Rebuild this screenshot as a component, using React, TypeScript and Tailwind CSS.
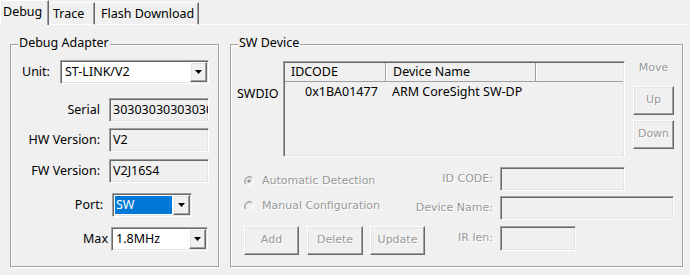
import React from "react";

const sunken =
  "border border-t-[#a0a0a0] border-l-[#a0a0a0] border-r-white border-b-white shadow-[inset_1px_1px_0_#696969,inset_-1px_-1px_0_#e3e3e3]";
const raised =
  "border border-t-white border-l-white border-r-[#696969] border-b-[#696969] shadow-[inset_-1px_-1px_0_#a0a0a0,inset_1px_1px_0_#e3e3e3]";
const dis =
  "font-['DejaVu_Sans',sans-serif] text-[11px] text-[#999999] [text-shadow:1px_1px_0_#ffffff]";

function Arrow() {
  return (
    <div className={`w-[17px] h-full flex items-center justify-center bg-[#f0f0f0] ${raised}`}>
      <svg width="7" height="4" viewBox="0 0 7 4">
        <polygon points="0,0 7,0 3.5,4" fill="#000" />
      </svg>
    </div>
  );
}

function Combo({ w, text, selected }: { w: string; text: string; selected?: boolean }) {
  return (
    <div className={`${w} h-[24px] flex bg-white ${sunken} p-[1px]`}>
      <div className="flex-1 flex items-stretch p-[1px]">
        {selected ? (
          <div className="flex-1 bg-[#0078d7] text-white pl-[1px] flex items-center leading-none">{text}</div>
        ) : (
          <div className="flex-1 pl-[2px] flex items-center leading-none">{text}</div>
        )}
      </div>
      <Arrow />
    </div>
  );
}

function Field({ text }: { text: string }) {
  return (
    <div className={`w-[100px] h-[24px] ${sunken} bg-[#f0f0f0] overflow-hidden whitespace-nowrap pl-[3px] flex items-center leading-none`}>
      {text}
    </div>
  );
}

function Group({ title, className, children }: { title: string; className: string; children: React.ReactNode }) {
  return (
    <div className={`relative border border-[#a0a0a0] shadow-[inset_1px_1px_0_#ffffff,1px_1px_0_#ffffff] h-[223px] ${className}`}>
      <span className="absolute -top-[10px] left-[7px] px-[1px] bg-[#f0f0f0] leading-[16px]">{title}</span>
      {children}
    </div>
  );
}

function Radio({ checked }: { checked?: boolean }) {
  return (
    <svg width="12" height="12" viewBox="0 0 12 12">
      <circle cx="6" cy="6" r="5" fill="#f0f0f0" />
      <path d="M 9.5 2.5 A 5 5 0 0 0 2.5 9.5" stroke="#9a9a9a" strokeWidth="1" fill="none" />
      <path d="M 9.5 2.5 A 5 5 0 0 1 2.5 9.5" stroke="#ffffff" strokeWidth="1" fill="none" />
      <path d="M 8.8 3.2 A 4 4 0 0 0 3.2 8.8" stroke="#c0c0c0" strokeWidth="1" fill="none" />
      {checked && <circle cx="6" cy="6" r="1.8" fill="#999999" />}
    </svg>
  );
}

function Btn({ w, label, h = "h-[29px]" }: { w: string; label: string; h?: string }) {
  return (
    <div className={`${w} ${h} shrink-0 flex items-center justify-center bg-[#f0f0f0] ${raised} ${dis}`}>{label}</div>
  );
}

function DisBox({ w }: { w: string }) {
  return <div className={`${w} h-[24px] ml-[7px] bg-[#f0f0f0] ${sunken}`} />;
}

export default function App() {
  return (
    <div className="w-[690px] h-[275px] bg-[#f0f0f0] overflow-hidden font-['Noto_Sans',sans-serif] text-[12.5px] text-black">
      {/* tabs */}
      <div className="flex h-[25px] items-end">
        <div className="w-[49px] h-[25px] border-t border-l border-white border-r border-r-[#696969] shadow-[inset_-1px_0_0_#a0a0a0] pl-[2px] leading-[22px]">
          Debug
        </div>
        <div className="w-[46px] h-[23px] border-t border-b border-white border-r border-r-[#696969] shadow-[inset_-1px_0_0_#a0a0a0] pl-[4px] leading-[21px]">
          Trace
        </div>
        <div className="w-[104px] h-[23px] border-t border-b border-white border-r border-r-[#696969] shadow-[inset_-1px_0_0_#a0a0a0] pl-[6px] leading-[21px] whitespace-nowrap">
          Flash Download
        </div>
        <div className="flex-1 h-[23px] border-b border-white" />
      </div>

      {/* body */}
      <div className="flex pt-[19px] pl-[10px] gap-[11px]">
        <Group title="Debug Adapter" className="w-[209px] flex flex-col">
          <div className="mt-[15px] h-[24px] flex items-center">
            <span className="w-[49px] pl-[11px]">Unit:</span>
            <Combo w="w-[149px]" text="ST-LINK/V2" />
          </div>
          <div className="mt-[14px] h-[24px] flex items-center">
            <span className="w-[98px] pr-[9px] text-right">Serial</span>
            <Field text="303030303030303030303030" />
          </div>
          <div className="mt-[6px] h-[24px] flex items-center">
            <span className="w-[98px] pr-[9px] text-right">HW Version:</span>
            <Field text="V2" />
          </div>
          <div className="mt-[7px] h-[24px] flex items-center">
            <span className="w-[98px] pr-[9px] text-right">FW Version:</span>
            <Field text="V2J16S4" />
          </div>
          <div className="mt-[10px] h-[24px] flex items-center">
            <span className="w-[101px] pr-[9px] text-right">Port:</span>
            <Combo w="w-[80px]" text="SW" selected />
          </div>
          <div className="mt-[10px] h-[24px] flex items-center">
            <span className="w-[100px] pr-[3px] text-right">Max</span>
            <Combo w="w-[97px]" text="1.8MHz" />
          </div>
        </Group>

        <Group title="SW Device" className="w-[453px] flex flex-col">
          <div className="mt-[16px] flex">
            <div className="w-[52px] pl-[6px] pt-[25px] leading-[16px]">SWDIO</div>
            <div className={`w-[342px] h-[96px] bg-[#f0f0f0] ${sunken} p-[1px]`}>
              <div className="flex h-[19px] border-b border-[#a0a0a0] leading-[18px]">
                <div className="w-[101px] pl-[6px] border-r border-[#a0a0a0] shadow-[1px_0_0_#ffffff]">IDCODE</div>
                <div className="w-[150px] pl-[7px] border-r border-[#a0a0a0] shadow-[1px_0_0_#ffffff]">Device Name</div>
                <div className="flex-1" />
              </div>
              <div className="flex h-[20px] items-center">
                <div className="w-[101px] pl-[20px]">0x1BA01477</div>
                <div className="w-[150px] pl-[6px] whitespace-nowrap">ARM CoreSight SW-DP</div>
              </div>
            </div>
            <div className="ml-[8px] w-[41px] flex flex-col items-center">
              <div className={`${dis} leading-[14px]`}>Move</div>
              <div className="mt-[11px]">
                <Btn w="w-[41px]" label="Up" />
              </div>
              <div className="mt-[5px]">
                <Btn w="w-[41px]" label="Down" />
              </div>
            </div>
          </div>

          <div className="mt-[10px] h-[24px] flex items-center">
            <div className="w-[172px] pl-[12px] pt-[4px]">
              <div className={`h-[16px] flex items-center gap-[7px] ${dis}`}>
                <Radio checked />
                <span>Automatic Detection</span>
              </div>
            </div>
            <span className={`w-[90px] text-right ${dis}`}>ID CODE:</span>
            <DisBox w="w-[125px]" />
          </div>
          <div className="mt-[5px] h-[24px] flex items-center">
            <div className="w-[172px] pl-[12px] pb-[4px]">
              <div className={`h-[16px] flex items-center gap-[7px] ${dis}`}>
                <Radio />
                <span className="whitespace-nowrap">Manual Configuration</span>
              </div>
            </div>
            <span className={`w-[90px] text-right ${dis} whitespace-nowrap`}>Device Name:</span>
            <DisBox w="w-[174px]" />
          </div>
          <div className="mt-[6px] flex items-start">
            <div className="w-[172px] pl-[13px] flex">
              <Btn w="w-[55px]" label="Add" />
              <div className="ml-[8px]">
                <Btn w="w-[56px]" label="Delete" />
              </div>
              <div className="ml-[7px]">
                <Btn w="w-[55px]" label="Update" />
              </div>
            </div>
            <div className="flex items-center h-[25px]">
              <span className={`w-[90px] text-right ${dis}`}>IR len:</span>
              <div className={`w-[76px] h-[25px] ml-[7px] bg-[#f0f0f0] ${sunken}`} />
            </div>
          </div>
        </Group>
      </div>
    </div>
  );
}
